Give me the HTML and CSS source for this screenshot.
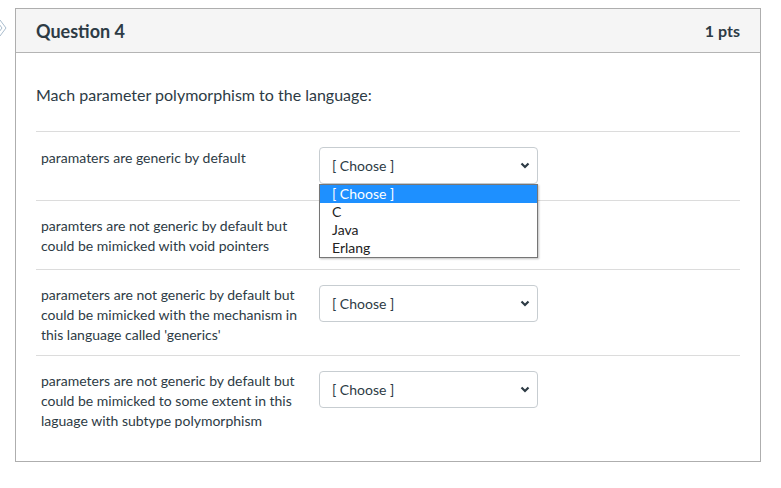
FILE: index.html
```html
<!DOCTYPE html>
<html>
<head>
	<title>Question 4</title>
	<link rel="stylesheet" href="styles.css">
</head>
<body>
	<svg class="flag" width="10" height="18" viewBox="0 0 10 18">
		<polygon points="-4,1 0,1 6,9 0,17 -4,17 2,9" fill="none" stroke="#a9bccd" stroke-width="1"/>
	</svg>

	<div class="question">
		<div class="header">
			<span class="title">Question 4</span>
			<span class="pts">1 pts</span>
		</div>

		<div class="content">
			<p class="prompt">Mach parameter polymorphism to the language:</p>

			<div class="answer">
				<div class="answer-text first">paramaters are generic by default</div>
				<div class="select-wrap">
					<select class="choice">
						<option>[ Choose ]</option>
						<option>C</option>
						<option>Java</option>
						<option>Erlang</option>
					</select>
					<svg class="arrow" width="10" height="7" viewBox="0 0 10 7">
						<polyline points="1.5,1.5 5,5 8.5,1.5" fill="none" stroke="#2d3b45" stroke-width="2.2"/>
					</svg>
					<div class="dropdown">
						<div class="option active">[ Choose ]</div>
						<div class="option">C</div>
						<div class="option">Java</div>
						<div class="option">Erlang</div>
					</div>
				</div>
			</div>

			<div class="answer">
				<div class="answer-text">paramters are not generic by default but could be mimicked with void pointers</div>
				<div class="select-wrap">
					<select class="choice">
						<option>[ Choose ]</option>
						<option>C</option>
						<option>Java</option>
						<option>Erlang</option>
					</select>
					<svg class="arrow" width="10" height="7" viewBox="0 0 10 7">
						<polyline points="1.5,1.5 5,5 8.5,1.5" fill="none" stroke="#2d3b45" stroke-width="2.2"/>
					</svg>
				</div>
			</div>

			<div class="answer">
				<div class="answer-text">parameters are not generic by default but could be mimicked with the mechanism in this language called 'generics'</div>
				<div class="select-wrap">
					<select class="choice">
						<option>[ Choose ]</option>
						<option>C</option>
						<option>Java</option>
						<option>Erlang</option>
					</select>
					<svg class="arrow" width="10" height="7" viewBox="0 0 10 7">
						<polyline points="1.5,1.5 5,5 8.5,1.5" fill="none" stroke="#2d3b45" stroke-width="2.2"/>
					</svg>
				</div>
			</div>

			<div class="answer">
				<div class="answer-text">parameters are not generic by default but could be mimicked to some extent in this laguage with subtype polymorphism</div>
				<div class="select-wrap">
					<select class="choice">
						<option>[ Choose ]</option>
						<option>C</option>
						<option>Java</option>
						<option>Erlang</option>
					</select>
					<svg class="arrow" width="10" height="7" viewBox="0 0 10 7">
						<polyline points="1.5,1.5 5,5 8.5,1.5" fill="none" stroke="#2d3b45" stroke-width="2.2"/>
					</svg>
				</div>
			</div>
		</div>
	</div>
</body>
</html>
```

FILE: styles.css
```css
		body {
			margin: 0;
			padding: 0;
			background-color: #fff;
			font-family: Lato, "Open Sans", sans-serif;
			color: #2d3b45;
			position: relative;
		}
		.flag {
			position: absolute;
			left: 0;
			top: 19px;
		}
		.question {
			width: 746px;
			box-sizing: border-box;
			margin: 8px 0 0 15px;
			border: 1px solid #aeaeae;
		}
		.header {
			display: flex;
			justify-content: space-between;
			align-items: center;
			height: 43px;
			padding: 0 20px;
			background-color: #f5f5f5;
			border-bottom: 1px solid #b4b4b4;
		}
		.title {
			font-size: 18px;
			font-weight: bold;
		}
		.pts {
			font-size: 16px;
			font-weight: bold;
		}
		.content {
			padding: 0 20px 20px 20px;
		}
		.prompt {
			margin: 0;
			padding: 30px 0 24px 0;
			font-size: 16px;
			line-height: 24px;
		}
		.answer {
			display: flex;
			padding: 14px 0 10px 5px;
			border-top: 1px solid #dcdcdc;
		}
		.answer-text {
			width: 262px;
			padding-top: 1px;
			font-size: 14px;
			line-height: 20px;
		}
		.answer-text.first {
			padding-top: 2px;
		}
		.select-wrap {
			position: relative;
			margin: 1px 0 6px 16px;
			width: 219px;
			height: 37px;
		}
		.choice {
			-webkit-appearance: none;
			appearance: none;
			width: 100%;
			height: 37px;
			margin: 0;
			padding: 0 30px 0 12px;
			background-color: #fff;
			border: 1px solid #c7cdd1;
			border-radius: 4px;
			font-family: Lato, sans-serif;
			font-size: 14px;
			color: #2d3b45;
		}
		.arrow {
			position: absolute;
			right: 8px;
			top: 15px;
			pointer-events: none;
		}
		.dropdown {
			position: absolute;
			left: 0;
			top: 37px;
			width: 219px;
			box-sizing: border-box;
			background-color: #fff;
			border: 1px solid #767676;
			box-shadow: 1px 1px 2px rgba(0, 0, 0, 0.25);
			z-index: 2;
		}
		.option {
			height: 18px;
			line-height: 18px;
			padding-left: 12px;
			font-size: 14px;
			color: #222;
		}
		.option.active {
			background-color: #1e90ff;
			color: #fff;
		}
```
